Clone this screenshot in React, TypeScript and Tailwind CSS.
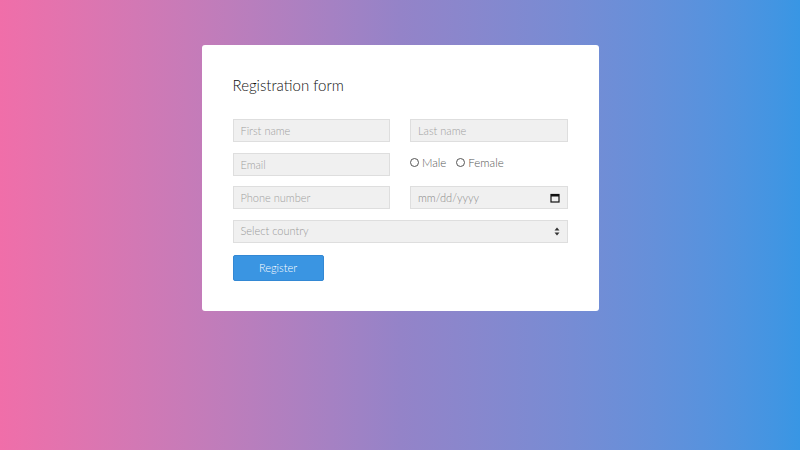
import React from 'react';

const font = { fontFamily: 'Lato, "Open Sans", sans-serif' };

const field =
  'h-[23px] w-full bg-[#f0f0f0] border border-[#dedede] px-[7px] text-[11px] text-[#555] placeholder:text-[#a0a0a0] outline-none';

export default function App() {
  return (
    <div
      className="w-[800px] h-[450px] pt-[45px] bg-gradient-to-r from-[#f06ea9] via-[#9483c8] to-[#3896e4] font-light"
      style={font}
    >
      <div className="mx-auto w-[397px] h-[266px] bg-white rounded-[3px] px-[31px] pt-[30px]">
        <h2 className="text-[15px] leading-[20px] text-[#111] font-light mb-[24px]">Registration form</h2>
        <form className="grid grid-cols-2 gap-x-[20px] gap-y-[10.7px]">
          <input placeholder="First name" className={field} />
          <input placeholder="Last name" className={field} />
          <input placeholder="Email" className={field} />
          <div className="flex items-start gap-[10px] pt-[1px] text-[11.5px] text-[#555]">
            <label className="flex items-center gap-[3px]">
              <span className="w-[9px] h-[9px] rounded-full border border-[#555]" />
              Male
            </label>
            <label className="flex items-center gap-[3px]">
              <span className="w-[9px] h-[9px] rounded-full border border-[#555]" />
              Female
            </label>
          </div>
          <input placeholder="Phone number" className={field} />
          <div className="h-[23px] w-full bg-[#f0f0f0] border border-[#dedede] px-[7px] flex items-center justify-between text-[11px] text-[#888]">
            <span>mm/dd/yyyy</span>
            <svg width="10" height="10" viewBox="0 0 10 10">
              <rect x="1" y="1.5" width="8" height="7.5" fill="none" stroke="#111" strokeWidth="1.2" />
              <rect x="1" y="1.5" width="8" height="2" fill="#111" />
            </svg>
          </div>
          <div className="col-span-2 h-[23px] w-full bg-[#f0f0f0] border border-[#dedede] px-[7px] flex items-center justify-between text-[11px] text-[#999]">
            <span>Select country</span>
            <svg width="6" height="9" viewBox="0 0 6 9">
              <path d="M3 0.5 L5.5 3.5 H0.5 Z" fill="#333" />
              <path d="M3 8.5 L5.5 5.5 H0.5 Z" fill="#333" />
            </svg>
          </div>
          <div className="col-span-2">
            <button
              type="button"
              className="w-[91px] h-[26px] bg-[#3a95e2] text-white text-[11px] rounded-[2px] border border-[#3388d4]"
            >
              Register
            </button>
          </div>
        </form>
      </div>
    </div>
  );
}
